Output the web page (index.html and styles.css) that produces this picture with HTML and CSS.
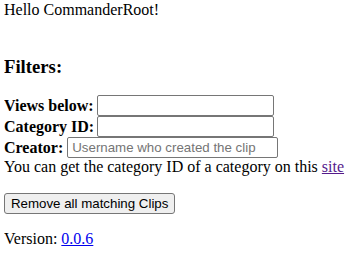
FILE: index.html
```html
<!DOCTYPE html>
<html>
<head>
    <title>Clip Remover</title>
    <link rel="stylesheet" href="styles.css">
</head>
<body>
    <p class="hello">Hello CommanderRoot!</p>

    <h3 class="filters-title">Filters:</h3>
    <div class="filter"><b>Views below:</b> <input type="text" class="field"></div>
    <div class="filter"><b>Category ID:</b> <input type="text" class="field"></div>
    <div class="filter"><b>Creator:</b> <input type="text" class="field field-wide" placeholder="Username who created the clip"></div>
    <div class="hint">You can get the category ID of a category on this <a href="#" class="visited">site</a></div>

    <p class="actions"><button type="button" class="remove">Remove all matching Clips</button></p>

    <p class="version">Version: <a href="#">0.0.6</a></p>
</body>
</html>
```

FILE: styles.css
```css
body { margin: 0 4px; font-family: "Liberation Serif", "Times New Roman", serif; font-size: 16px; color: #000; background: #fff; }
.hello { margin: 0; padding-top: 1px; line-height: 18px; }
.filters-title { margin: 37px 0 18px; font-size: 18.7px; line-height: 21px; }
.filter { line-height: 21px; height: 21px; }
.field { box-sizing: border-box; width: 177px; height: 21px; margin: 0 0 0 -1px; padding: 1px 4px; border: 1px solid #767676; border-radius: 2px; font-family: "Liberation Sans", Arial, sans-serif; font-size: 13.3px; vertical-align: top; }
.field-wide { width: 211px; margin-left: 0; }
.field::placeholder { color: #757575; }
.hint { line-height: 18px; }
a { color: #0000ee; }
a.visited { color: #551a8b; }
.actions { margin: 17px 0 0; }
.remove { font-family: "Liberation Sans", Arial, sans-serif; font-size: 13.3px; padding: 1px 6px; height: 21px; border: 1px solid #767676; border-radius: 3px; background: #efefef; color: #000; }
.version { margin: 16px 0 0; line-height: 18px; }
```
